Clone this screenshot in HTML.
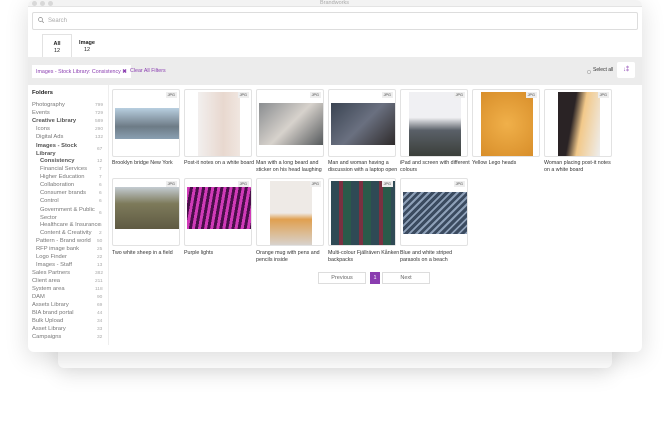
<!DOCTYPE html>
<html><head><meta charset="utf-8"><style>
*{box-sizing:border-box;margin:0;padding:0}
body{width:670px;height:427px;background:#fff;font-family:"Liberation Sans",sans-serif;position:relative;overflow:hidden;color:#333}
.shadow2{position:absolute;left:58px;top:300px;width:554px;height:68px;background:#fff;border-radius:6px;box-shadow:0 6px 20px rgba(0,0,0,.12)}
.win{position:absolute;left:28px;top:0;width:614px;height:352px;background:#fff;border-radius:6px;box-shadow:0 6px 24px rgba(0,0,0,.14);overflow:hidden}
.tb{height:7px;background:#f3f3f3;border-bottom:1px solid #e4e4e4;position:relative}
.dot{position:absolute;top:1px;width:5px;height:5px;border-radius:50%;background:#d8d8d8}
.title{position:absolute;left:292px;top:0;font-size:5.5px;color:#aaa}
.search{position:absolute;left:4px;top:12px;width:606px;height:18px;border:1px solid #ddd;border-radius:2px;font-size:6px;color:#aaa;padding:5px 0 0 15px}
.tab{position:absolute;top:34px;width:30px;height:24px;font-size:5.5px;text-align:center;padding-top:6px;line-height:7px;color:#222}
.fb{position:absolute;left:0;top:57px;width:614px;height:28px;background:#ececec}
.chip{position:absolute;left:4px;top:8px;height:13px;background:#fff;font-size:5.3px;color:#8a3db0;padding:3.5px 4px;white-space:nowrap}
.t{position:absolute;font-size:5.3px;line-height:6px;white-space:nowrap}
.side div{position:absolute;font-size:5.8px;color:#777;white-space:nowrap}
.side span{position:absolute;font-size:4.8px;color:#aaa}
.card{position:absolute;width:68px;height:68px;border:1px solid #e2e2e2;border-radius:2px;background:#fff}
.card .img{position:absolute}
.jpg{position:absolute;right:2px;top:2px;background:#eee;font-size:3.8px;padding:1px 2px;color:#444}
.cap{position:absolute;font-size:5.3px;line-height:7px;color:#333;width:72px}
</style></head><body>
<div class="shadow2"></div>
<div class="win">
<div class="tb"><div class="dot" style="left:4px"></div><div class="dot" style="left:12px"></div><div class="dot" style="left:20px"></div><div class="title">Brandworks</div></div>
<div class="search"><svg style="position:absolute;left:5px;top:4px" width="6" height="6" viewBox="0 0 6 6"><circle cx="2.5" cy="2.5" r="2" fill="none" stroke="#888" stroke-width=".7"/><path d="M4 4L5.8 5.8" stroke="#888" stroke-width=".7"/></svg>Search</div>
<div class="tab" style="left:14px;border:1px solid #e2e2e2;border-bottom:none;background:#fff"><b>All</b><br>12</div>
<div class="tab" style="left:44px"><b>Image</b><br>12</div>
<div class="fb">
<div class="chip">Images - Stock Library: Consistency <b>✖</b></div>
<div class="t" style="left:102px;top:11px;color:#8a3db0">Clear All Filters</div>
<div style="position:absolute;left:559px;top:13px;width:4px;height:4px;border:1px solid #bbb;border-radius:50%;background:#fff"></div>
<div class="t" style="left:565px;top:10px;font-size:5px;color:#333">Select all</div>
<div style="position:absolute;left:589px;top:5px;width:18px;height:16px;background:#fff;border-radius:2px;color:#8a3db0;font-size:6px;text-align:center;line-height:16px">↓⁑</div>
</div>
<div style="position:absolute;left:80px;top:85px;width:1px;height:260px;background:#eee"></div>
<div class="side">
<div style="left:4px;top:90px;color:#222;font-weight:bold">Folders</div>
<div style="left:4px;top:102px">Photography</div><span style="left:67px;top:103px">799</span>
<div style="left:4px;top:110px">Events</div><span style="left:67px;top:111px">729</span>
<div style="left:4px;top:118px;color:#555;font-weight:bold">Creative Library</div><span style="left:67px;top:119px">589</span>
<div style="left:8px;top:126px">Icons</div><span style="left:67px;top:127px">290</span>
<div style="left:8px;top:134px">Digital Ads</div><span style="left:67px;top:135px">132</span>
<div style="left:8px;top:142px;color:#555;font-weight:bold;line-height:8px">Images - Stock<br>Library</div><span style="left:69px;top:147px">67</span>
<div style="left:12px;top:158px;color:#555;font-weight:bold">Consistency</div><span style="left:69px;top:159px">12</span>
<div style="left:12px;top:166px">Financial Services</div><span style="left:71px;top:167px">7</span>
<div style="left:12px;top:174px">Higher Education</div><span style="left:71px;top:175px">7</span>
<div style="left:12px;top:182px">Collaboration</div><span style="left:71px;top:183px">6</span>
<div style="left:12px;top:190px">Consumer brands</div><span style="left:71px;top:191px">6</span>
<div style="left:12px;top:198px">Control</div><span style="left:71px;top:199px">6</span>
<div style="left:12px;top:206px;line-height:8px">Government &amp; Public<br>Sector</div><span style="left:71px;top:211px">6</span>
<div style="left:12px;top:222px">Healthcare &amp; Insurance</div><span style="left:71px;top:223px">5</span>
<div style="left:12px;top:230px">Content &amp; Creativity</div><span style="left:71px;top:231px">2</span>
<div style="left:8px;top:238px">Pattern - Brand world</div><span style="left:69px;top:239px">50</span>
<div style="left:8px;top:246px">RFP image bank</div><span style="left:69px;top:247px">25</span>
<div style="left:8px;top:254px">Logo Finder</div><span style="left:69px;top:255px">22</span>
<div style="left:8px;top:262px">Images - Staff</div><span style="left:69px;top:263px">13</span>
<div style="left:4px;top:270px">Sales Partners</div><span style="left:67px;top:271px">382</span>
<div style="left:4px;top:278px">Client area</div><span style="left:67px;top:279px">211</span>
<div style="left:4px;top:286px">System area</div><span style="left:67px;top:287px">118</span>
<div style="left:4px;top:294px">DAM</div><span style="left:69px;top:295px">90</span>
<div style="left:4px;top:302px">Assets Library</div><span style="left:69px;top:303px">69</span>
<div style="left:4px;top:310px">BIA brand portal</div><span style="left:69px;top:311px">44</span>
<div style="left:4px;top:318px">Bulk Upload</div><span style="left:69px;top:319px">34</span>
<div style="left:4px;top:326px">Asset Library</div><span style="left:69px;top:327px">33</span>
<div style="left:4px;top:334px">Campaigns</div><span style="left:69px;top:335px">32</span>
</div>

<div class="card" style="left:84px;top:89px"><div class="img" style="left:2px;top:18px;width:64px;height:31px;background:linear-gradient(#b8cfe0,#6d7b86 60%,#8aa0b2)"></div><div class="jpg">JPG</div></div>
<div class="cap" style="left:84px;top:160px">Brooklyn bridge New York</div>
<div class="card" style="left:156px;top:89px"><div class="img" style="left:13px;top:2px;width:42px;height:64px;background:linear-gradient(90deg,#f2efee,#e8d8cf 60%,#f0e6e0)"></div><div class="jpg">JPG</div></div>
<div class="cap" style="left:156px;top:160px">Post-it notes on a white board</div>
<div class="card" style="left:228px;top:89px"><div class="img" style="left:2px;top:13px;width:64px;height:42px;background:linear-gradient(135deg,#8a8d90,#d7d2cc 50%,#55595c)"></div><div class="jpg">JPG</div></div>
<div class="cap" style="left:228px;top:160px">Man with a long beard and sticker on his head laughing</div>
<div class="card" style="left:300px;top:89px"><div class="img" style="left:2px;top:13px;width:64px;height:42px;background:linear-gradient(135deg,#3a4452,#6a7080 50%,#2e2a2a)"></div><div class="jpg">JPG</div></div>
<div class="cap" style="left:300px;top:160px">Man and woman having a discussion with a laptop open</div>
<div class="card" style="left:372px;top:89px"><div class="img" style="left:8px;top:2px;width:52px;height:64px;background:linear-gradient(#f0f0f3 40%,#5a6068 60%,#3b3f3a)"></div><div class="jpg">JPG</div></div>
<div class="cap" style="left:372px;top:160px">iPad and screen with different colours</div>
<div class="card" style="left:444px;top:89px"><div class="img" style="left:8px;top:2px;width:52px;height:64px;background:radial-gradient(circle,#f0b04a,#d88e2a)"></div><div class="jpg">JPG</div></div>
<div class="cap" style="left:444px;top:160px">Yellow Lego heads</div>
<div class="card" style="left:516px;top:89px"><div class="img" style="left:13px;top:2px;width:42px;height:64px;background:linear-gradient(100deg,#2a2325 35%,#f2c98a 55%,#eee)"></div><div class="jpg">JPG</div></div>
<div class="cap" style="left:516px;top:160px">Woman placing post-it notes on a white board</div>
<div class="card" style="left:84px;top:178px"><div class="img" style="left:2px;top:8px;width:64px;height:42px;background:linear-gradient(#c4ccd2,#7d7a5a 40%,#5f5a43)"></div><div class="jpg">JPG</div></div>
<div class="cap" style="left:84px;top:250px">Two white sheep in a field</div>
<div class="card" style="left:156px;top:178px"><div class="img" style="left:2px;top:8px;width:64px;height:42px;background:repeating-linear-gradient(100deg,#d03ab8 0 3px,#4a0f4a 3px 6px)"></div><div class="jpg">JPG</div></div>
<div class="cap" style="left:156px;top:250px">Purple lights</div>
<div class="card" style="left:228px;top:178px"><div class="img" style="left:13px;top:2px;width:42px;height:64px;background:linear-gradient(#eeeae6 50%,#e0a050 60%,#d8d2cc)"></div><div class="jpg">JPG</div></div>
<div class="cap" style="left:228px;top:250px">Orange mug with pens and pencils inside</div>
<div class="card" style="left:300px;top:178px"><div class="img" style="left:2px;top:2px;width:64px;height:64px;background:repeating-linear-gradient(90deg,#2f4a55 0 8px,#7a3040 8px 12px,#2a5a4a 12px 20px)"></div><div class="jpg">JPG</div></div>
<div class="cap" style="left:300px;top:250px">Multi-colour Fjällräven Kånken backpacks</div>
<div class="card" style="left:372px;top:178px"><div class="img" style="left:2px;top:13px;width:64px;height:42px;background:repeating-linear-gradient(135deg,#3b4b60 0 3px,#8ea0b8 3px 5px)"></div><div class="jpg">JPG</div></div>
<div class="cap" style="left:372px;top:250px">Blue and white striped parasols on a beach</div>
<div style="position:absolute;left:290px;top:272px;width:48px;height:12px;border:1px solid #ddd;font-size:5.5px;color:#666;text-align:center;line-height:10px">Previous</div>
<div style="position:absolute;left:342px;top:272px;width:10px;height:12px;background:#8a3db0;color:#fff;font-size:5.5px;text-align:center;line-height:12px">1</div>
<div style="position:absolute;left:354px;top:272px;width:48px;height:12px;border:1px solid #ddd;font-size:5.5px;color:#666;text-align:center;line-height:10px">Next</div>
</div>
</body></html>
